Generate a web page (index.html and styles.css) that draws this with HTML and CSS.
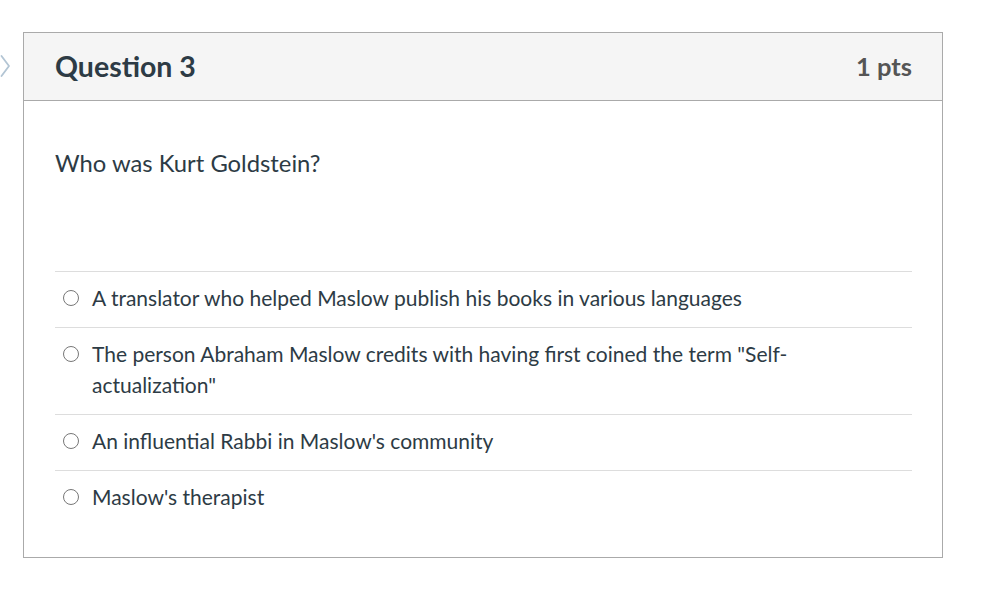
FILE: index.html
```html
<!DOCTYPE html>
<html>
<head>
<meta charset="utf-8">
<link rel="stylesheet" href="styles.css">
</head>
<body>
<div class="page">
  <svg class="chevron" width="12" height="24" viewBox="0 0 12 24">
    <polyline points="1.5,2 9,12 1.5,22" fill="none" stroke="#b3c5d4" stroke-width="1.8" stroke-linecap="round" stroke-linejoin="round"/>
  </svg>
  <div class="question">
    <div class="q-header">
      <h2 class="q-title">Question 3</h2>
      <span class="q-points">1 pts</span>
    </div>
    <div class="q-body">
      <p class="q-text">Who was Kurt Goldstein?</p>
      <div class="answers">
        <label class="answer"><span class="radio"></span><span class="answer-text">A translator who helped Maslow publish his books in various languages</span></label>
        <label class="answer"><span class="radio"></span><span class="answer-text">The person Abraham Maslow credits with having first coined the term "Self-actualization"</span></label>
        <label class="answer"><span class="radio"></span><span class="answer-text">An influential Rabbi in Maslow's community</span></label>
        <label class="answer"><span class="radio"></span><span class="answer-text">Maslow's therapist</span></label>
      </div>
    </div>
  </div>
</div>
</body>
</html>
```

FILE: styles.css
```css
html, body {
  margin: 0;
  padding: 0;
  background: #ffffff;
}
body {
  font-family: Lato, "Open Sans", sans-serif;
  color: #2d3b45;
}
.page {
  position: relative;
  padding: 32px 0 0 23px;
}
.chevron {
  position: absolute;
  left: 0;
  top: 54px;
}
.question {
  width: 918px;
  height: 524px;
  border: 1px solid #aaaaaa;
}
.q-header {
  display: flex;
  justify-content: space-between;
  align-items: center;
  height: 65px;
  padding: 0 30px 2px 31px;
  background: #f5f5f5;
  border-bottom: 1px solid #aaaaaa;
}
.q-title {
  margin: 0;
  font-size: 28.5px;
  font-weight: 700;
  color: #2d3b45;
}
.q-points {
  font-size: 25.5px;
  font-weight: 700;
  color: #555555;
}
.q-body {
  padding: 0 30px 0 31px;
}
.q-text {
  margin: 0;
  padding-top: 48px;
  font-size: 23.8px;
  line-height: 28px;
  height: 122px;
}
.answers {
  border-top: 1px solid #dddddd;
}
.answer {
  display: flex;
  align-items: flex-start;
  gap: 13px;
  padding: 10px 0 14px 8px;
  border-bottom: 1px solid #dddddd;
  font-size: 21px;
  line-height: 31px;
}
.answer:last-child {
  border-bottom: none;
}
.radio {
  flex: none;
  width: 16px;
  height: 16px;
  margin-top: 8px;
  border: 1.5px solid #777777;
  border-radius: 50%;
  box-sizing: border-box;
}
.answer-text {
  max-width: 800px;
}
```
